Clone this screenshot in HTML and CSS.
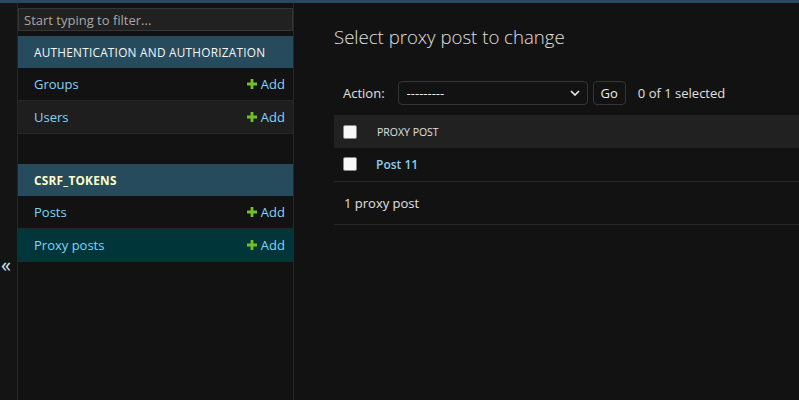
FILE: index.html
```html
<!DOCTYPE html>
<html lang="en">
<head>
    <meta charset="UTF-8">
    <meta name="viewport" content="width=device-width, initial-scale=1.0">
    <title>Select proxy post to change</title>
    <link rel="stylesheet" href="styles.css">
</head>
<body>
    <div class="header-edge"></div>
    <div class="main">
        <button class="toggle-nav-sidebar" aria-label="Toggle navigation">&laquo;</button>
        <nav class="nav-sidebar">
            <input type="search" class="nav-filter" placeholder="Start typing to filter...">
            <table class="module">
                <caption><a href="#" class="section">Authentication and Authorization</a></caption>
                <tr>
                    <th><a href="#">Groups</a></th>
                    <td><a href="#" class="addlink"><svg width="10" height="10" viewBox="0 0 10 10"><path d="M3.6 0h2.8v3.6H10v2.8H6.4V10H3.6V6.4H0V3.6h3.6z" fill="#70bf2b"/></svg>Add</a></td>
                </tr>
                <tr>
                    <th><a href="#">Users</a></th>
                    <td><a href="#" class="addlink"><svg width="10" height="10" viewBox="0 0 10 10"><path d="M3.6 0h2.8v3.6H10v2.8H6.4V10H3.6V6.4H0V3.6h3.6z" fill="#70bf2b"/></svg>Add</a></td>
                </tr>
            </table>
            <table class="module current-app">
                <caption><a href="#" class="section">Csrf_Tokens</a></caption>
                <tr>
                    <th><a href="#">Posts</a></th>
                    <td><a href="#" class="addlink"><svg width="10" height="10" viewBox="0 0 10 10"><path d="M3.6 0h2.8v3.6H10v2.8H6.4V10H3.6V6.4H0V3.6h3.6z" fill="#70bf2b"/></svg>Add</a></td>
                </tr>
                <tr class="current-model">
                    <th><a href="#">Proxy posts</a></th>
                    <td><a href="#" class="addlink"><svg width="10" height="10" viewBox="0 0 10 10"><path d="M3.6 0h2.8v3.6H10v2.8H6.4V10H3.6V6.4H0V3.6h3.6z" fill="#70bf2b"/></svg>Add</a></td>
                </tr>
            </table>
        </nav>
        <div class="content">
            <h1>Select proxy post to change</h1>
            <div class="actions">
                <label>Action:</label>
                <span class="select-wrap">
                    <select>
                        <option>---------</option>
                    </select>
                    <svg class="chevron" width="10" height="6" viewBox="0 0 10 6"><path d="M1 1l4 4 4-4" fill="none" stroke="#eee" stroke-width="1.6"/></svg>
                </span>
                <button class="button">Go</button>
                <span class="action-counter">0 of 1 selected</span>
            </div>
            <table class="results">
                <thead>
                    <tr>
                        <th class="action-checkbox"><input type="checkbox"></th>
                        <th class="column">Proxy post</th>
                    </tr>
                </thead>
                <tbody>
                    <tr>
                        <td class="action-checkbox"><input type="checkbox"></td>
                        <th class="field"><a href="#">Post 11</a></th>
                    </tr>
                </tbody>
            </table>
            <p class="paginator">1 proxy post</p>
        </div>
    </div>
</body>
</html>
```

FILE: styles.css
```css
* {
    box-sizing: border-box;
}
body {
    margin: 0;
    background: #121212;
    color: #eeeeee;
    font-family: "Open Sans", "Noto Sans", sans-serif;
    font-size: 13px;
}
a {
    color: #81d4fa;
    text-decoration: none;
}
.header-edge {
    height: 3px;
    background: #264b5d;
}
.main {
    display: flex;
    min-height: 397px;
}
.toggle-nav-sidebar {
    flex: 0 0 18px;
    display: flex;
    justify-content: flex-start;
    align-items: flex-start;
    padding: 250px 0 0 1px;
    border: 0;
    border-right: 1px solid #272727;
    background: #141414;
    color: #cfe9f7;
    font-family: "Open Sans", sans-serif;
    font-size: 20px;
    line-height: 24px;
    cursor: pointer;
}
.nav-sidebar {
    flex: 0 0 276px;
    border-right: 1px solid #272727;
    padding-top: 5px;
}
.nav-filter {
    display: block;
    width: 100%;
    height: 23px;
    margin: 0 0 5px;
    padding: 2px 5px;
    border: 1px solid #353535;
    background: #212121;
    color: #eeeeee;
    font-family: inherit;
    font-size: 13px;
}
.nav-filter::placeholder {
    color: #a8a8a8;
}
.module {
    width: 100%;
    border-collapse: collapse;
    margin-bottom: 30px;
}
.module caption {
    background: #264b5d;
    padding: 8px 8px 8px 16px;
    font-size: 11.8px;
    line-height: 16px;
    text-align: left;
    text-transform: uppercase;
    letter-spacing: 0.25px;
    white-space: nowrap;
}
.module caption a {
    color: #f7f7f7;
}
.current-app caption a {
    color: #ffffcc;
    font-weight: bold;
}
.module th,
.module td {
    padding: 8px;
    line-height: 16px;
    border-bottom: 1px solid #272727;
    font-weight: normal;
    text-align: left;
}
.module th {
    width: 100%;
    padding-left: 16px;
}
.module td {
    white-space: nowrap;
}
.module tr:nth-child(even) {
    background: #1e1e1e;
}
.module tr.current-model {
    background: #00363a;
}
.addlink svg {
    margin-right: 4px;
    vertical-align: 0;
}
.content {
    flex: 1;
    padding: 20px 0 0 40px;
    overflow: hidden;
}
h1 {
    margin: 0 0 20px;
    font-size: 18.6px;
    font-weight: 300;
    line-height: 28px;
    color: #e0e0e0;
}
.actions {
    display: flex;
    align-items: center;
    padding: 10px 10px 10px 9px;
    line-height: 24px;
    color: #e0e0e0;
}
.actions label {
    margin-right: 13px;
}
.select-wrap {
    position: relative;
    display: inline-block;
}
.select-wrap select {
    appearance: none;
    width: 190px;
    height: 24px;
    padding: 0 8px;
    border: 1px solid #353535;
    border-radius: 4px;
    background: #121212;
    color: #eeeeee;
    font-family: inherit;
    font-size: 13px;
}
.chevron {
    position: absolute;
    right: 8px;
    top: 9px;
}
.button {
    height: 24px;
    margin-left: 5px;
    padding: 0 7px;
    border: 1px solid #353535;
    border-radius: 4px;
    background: #121212;
    color: #eeeeee;
    font-family: inherit;
    font-size: 13px;
}
.action-counter {
    margin-left: 12px;
}
.results {
    width: 100%;
    border-collapse: collapse;
}
.results thead th {
    background: #212121;
    height: 33px;
    color: #e0e0e0;
    font-size: 10.5px;
    font-weight: normal;
    text-transform: uppercase;
    text-align: left;
}
.results th.column {
    padding: 0 10px 0 11px;
}
.results .action-checkbox {
    width: 32px;
    padding: 0 0 0 9px;
}
.results input[type="checkbox"] {
    appearance: none;
    display: block;
    width: 14px;
    height: 14px;
    margin: 0;
    border: 1px solid #8a8a8a;
    border-radius: 2px;
    background: #f8f8f8;
}
.results tbody td,
.results tbody th {
    height: 33px;
    border-bottom: 1px solid #272727;
}
.results tbody th {
    padding: 0 10px;
    text-align: left;
    font-size: 12px;
    font-weight: 600;
}
.results tbody th a {
    color: #8fcdee;
}
.paginator {
    margin: 0;
    padding: 10px;
    line-height: 22px;
    color: #e0e0e0;
    border-bottom: 1px solid #272727;
}
```
